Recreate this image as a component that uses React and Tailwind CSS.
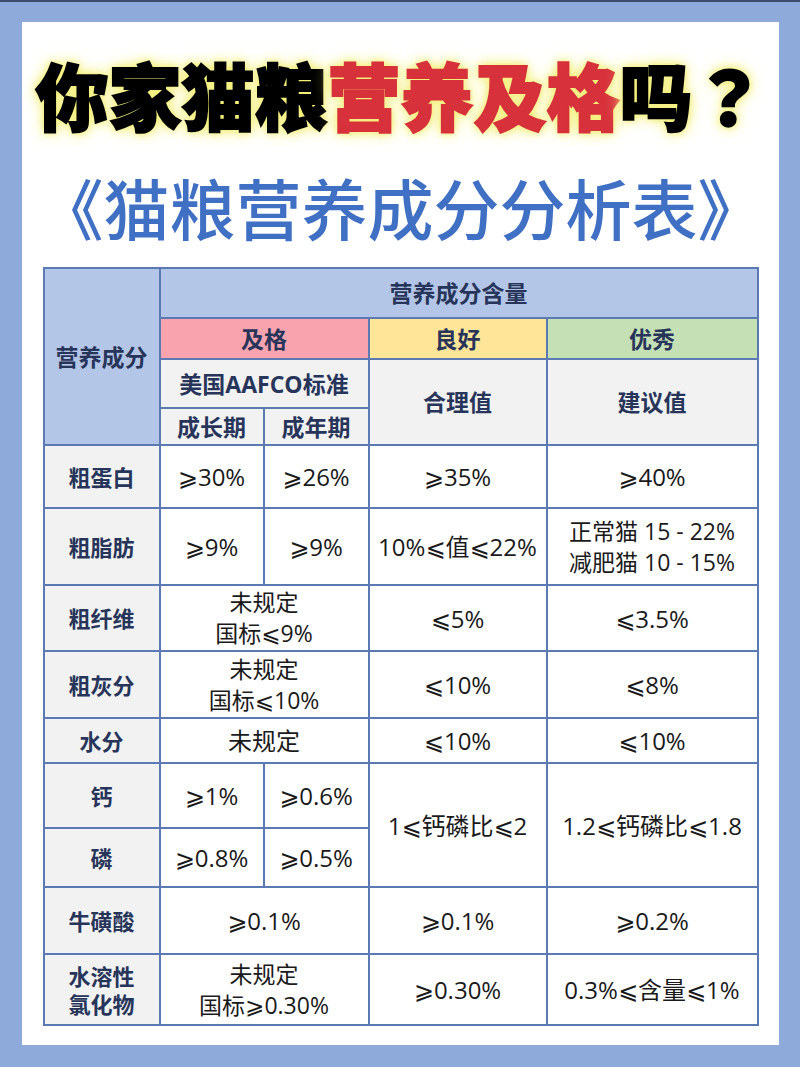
import React from "react";

const FONT = { fontFamily: '"Open Sans", "Noto Sans CJK SC", "DejaVu Sans", sans-serif' };

function C({ className, children }) {
  return (
    <div className={"flex flex-col items-center justify-center text-center " + className}>
      {children}
    </div>
  );
}

const hd = "font-bold text-[23px] leading-[28px] text-[#28355a] ";
const lb = "font-bold text-[22px] leading-[28px] text-[#28355a] bg-[#f2f2f3] ";
const dt = "text-[24px] leading-[29px] text-[#1a1a1a] bg-white ";
const dt2 = "text-[23px] leading-[31px] text-[#1a1a1a] bg-white ";

export default function App() {
  return (
    <div className="w-[800px] h-[1067px] bg-[#8eaadb] border-t-2 border-[#3b4a6d] pt-[20px]" style={FONT}>
      <div className="ml-[22px] w-[757px] h-[1023px] bg-white pt-[26px] flex flex-col items-center">
        <div
          className="h-[90px] leading-[90px] text-[73px] font-black whitespace-nowrap [text-shadow:0_0_6px_#f3ee74,0_0_12px_#f3ee74,0_0_18px_#f6f39a]"
          style={{ fontFamily: '"Noto Sans CJK SC", sans-serif' }}
        >
          <span className="text-black [-webkit-text-stroke:2px_#000]">你家猫粮</span>
          <span className="text-[#d7313b] [-webkit-text-stroke:2px_#d7313b]">营养及格</span>
          <span className="text-black [-webkit-text-stroke:2px_#000]">吗</span>
          <span
            className="text-black [-webkit-text-stroke:2px_#000]"
            style={{ fontFamily: '"Noto Sans CJK JP", sans-serif' }}
          >
            ？
          </span>
        </div>
        <div
          className="mt-[28px] h-[80px] leading-[80px] text-[66px] font-medium text-[#4070c4] whitespace-nowrap"
          style={{ fontFamily: '"Noto Sans CJK SC", sans-serif' }}
        >
          《猫粮营养成分分析表》
        </div>
        <div className="mt-[21px] w-[716px] p-[2px] bg-[#5b79b3] grid gap-[2px] grid-cols-[114px_102px_103px_176px_209px] grid-rows-[48px_39px_47px_35px_61px_75px_64px_65px_43px_63px_57px_65px_69px]">
          <C className={hd + "row-start-1 row-span-4 col-start-1 bg-[#b4c6e7]"}>营养成分</C>
          <C className={hd + "row-start-1 col-start-2 col-span-4 bg-[#b4c6e7]"}>营养成分含量</C>
          <C className={hd + "row-start-2 col-start-2 col-span-2 bg-[#f9a3ae]"}>及格</C>
          <C className={hd + "row-start-2 col-start-4 bg-[#fee597]"}>良好</C>
          <C className={hd + "row-start-2 col-start-5 bg-[#c6e0b5]"}>优秀</C>
          <C className={hd + "row-start-3 col-start-2 col-span-2 bg-[#f2f2f3]"}>美国AAFCO标准</C>
          <C className={hd + "row-start-3 col-start-4 row-span-2 bg-[#f2f2f3]"}>合理值</C>
          <C className={hd + "row-start-3 col-start-5 row-span-2 bg-[#f2f2f3]"}>建议值</C>
          <C className={hd + "row-start-4 col-start-2 bg-[#f2f2f3]"}>成长期</C>
          <C className={hd + "row-start-4 col-start-3 bg-[#f2f2f3]"}>成年期</C>

          <C className={lb + "row-start-5 col-start-1"}>粗蛋白</C>
          <C className={dt + "row-start-5 col-start-2"}>⩾30%</C>
          <C className={dt + "row-start-5 col-start-3"}>⩾26%</C>
          <C className={dt + "row-start-5 col-start-4"}>⩾35%</C>
          <C className={dt + "row-start-5 col-start-5"}>⩾40%</C>

          <C className={lb + "row-start-6 col-start-1"}>粗脂肪</C>
          <C className={dt + "row-start-6 col-start-2"}>⩾9%</C>
          <C className={dt + "row-start-6 col-start-3"}>⩾9%</C>
          <C className={dt + "row-start-6 col-start-4 whitespace-nowrap"}>10%⩽值⩽22%</C>
          <C className={dt2 + "row-start-6 col-start-5 whitespace-nowrap"}>
            <span>正常猫 15 - 22%</span>
            <span>减肥猫 10 - 15%</span>
          </C>

          <C className={lb + "row-start-7 col-start-1"}>粗纤维</C>
          <C className={dt2 + "row-start-7 col-start-2 col-span-2"}>
            <span>未规定</span>
            <span>国标⩽9%</span>
          </C>
          <C className={dt + "row-start-7 col-start-4"}>⩽5%</C>
          <C className={dt + "row-start-7 col-start-5"}>⩽3.5%</C>

          <C className={lb + "row-start-8 col-start-1"}>粗灰分</C>
          <C className={dt2 + "row-start-8 col-start-2 col-span-2"}>
            <span>未规定</span>
            <span>国标⩽10%</span>
          </C>
          <C className={dt + "row-start-8 col-start-4"}>⩽10%</C>
          <C className={dt + "row-start-8 col-start-5"}>⩽8%</C>

          <C className={lb + "row-start-9 col-start-1"}>水分</C>
          <C className={dt + "row-start-9 col-start-2 col-span-2"}>未规定</C>
          <C className={dt + "row-start-9 col-start-4"}>⩽10%</C>
          <C className={dt + "row-start-9 col-start-5"}>⩽10%</C>

          <C className={lb + "row-start-10 col-start-1"}>钙</C>
          <C className={dt + "row-start-10 col-start-2"}>⩾1%</C>
          <C className={dt + "row-start-10 col-start-3"}>⩾0.6%</C>
          <C className={dt + "row-start-10 col-start-4 row-span-2 whitespace-nowrap"}>1⩽钙磷比⩽2</C>
          <C className={dt + "row-start-10 col-start-5 row-span-2 whitespace-nowrap"}>1.2⩽钙磷比⩽1.8</C>

          <C className={lb + "row-start-11 col-start-1"}>磷</C>
          <C className={dt + "row-start-11 col-start-2"}>⩾0.8%</C>
          <C className={dt + "row-start-11 col-start-3"}>⩾0.5%</C>

          <C className={lb + "row-start-12 col-start-1"}>牛磺酸</C>
          <C className={dt + "row-start-12 col-start-2 col-span-2"}>⩾0.1%</C>
          <C className={dt + "row-start-12 col-start-4"}>⩾0.1%</C>
          <C className={dt + "row-start-12 col-start-5"}>⩾0.2%</C>

          <C className={lb + "row-start-13 col-start-1"}>
            <span>水溶性</span>
            <span>氯化物</span>
          </C>
          <C className={dt2 + "row-start-13 col-start-2 col-span-2"}>
            <span>未规定</span>
            <span>国标⩾0.30%</span>
          </C>
          <C className={dt + "row-start-13 col-start-4"}>⩾0.30%</C>
          <C className={dt + "row-start-13 col-start-5 whitespace-nowrap"}>0.3%⩽含量⩽1%</C>
        </div>
      </div>
    </div>
  );
}
